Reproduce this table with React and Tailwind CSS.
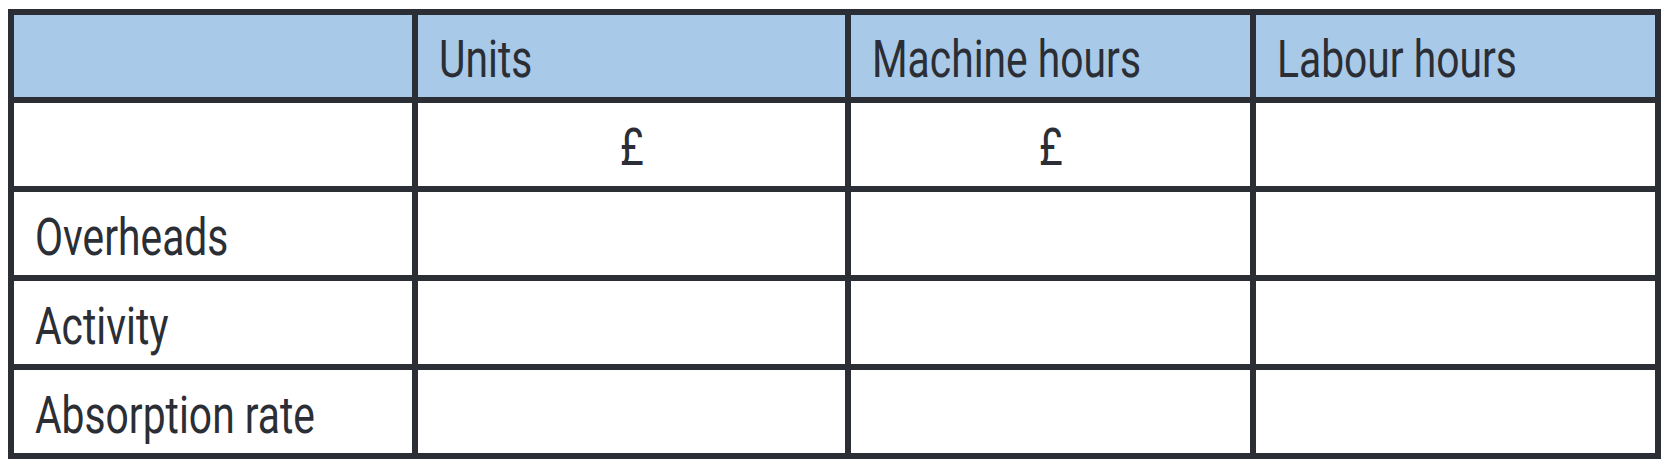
import React from 'react';

const cols = ['', 'Units', 'Machine hours', 'Labour hours'];

const rows = [
  ['', '£', '£', ''],
  ['Overheads', '', '', ''],
  ['Activity', '', '', ''],
  ['Absorption rate', '', '', ''],
];

const font = { fontFamily: 'Roboto, "Noto Sans", sans-serif' };

// narrow label: the source uses a condensed face, so squeeze Roboto horizontally
const Label = ({ children, center }) => (
  <span className={center ? 'inline-block whitespace-nowrap origin-center scale-x-[0.8]' : 'inline-block whitespace-nowrap origin-left scale-x-[0.8]'}>
    {children}
  </span>
);

const App = () => {
  return (
    <div className="w-[1669px] h-[467px] bg-white pt-[9px] pl-[8px]" style={font}>
      <div className="grid grid-cols-[398px_427px_399px_399px] grid-rows-[82px_83px_83px_83px_83px] gap-[6px] p-[6px] w-[1653px] bg-[#2b2e35] text-[#2b2e35] text-[51px] leading-none">
        {cols.map((c, i) => (
          <div key={'h' + i} className="bg-[#a8c9e7] flex items-center pl-[21px] pt-[7px]">
            {c && <Label>{c}</Label>}
          </div>
        ))}
        {rows.map((r, ri) =>
          r.map((cell, ci) => (
            <div
              key={ri + '-' + ci}
              className={ci > 0 ? 'bg-white flex items-center justify-center pt-[6px]' : 'bg-white flex items-center pl-[21px] pt-[7px]'}
            >
              {cell && <Label center={ci > 0}>{cell}</Label>}
            </div>
          ))
        )}
      </div>
    </div>
  );
};

export default App;
